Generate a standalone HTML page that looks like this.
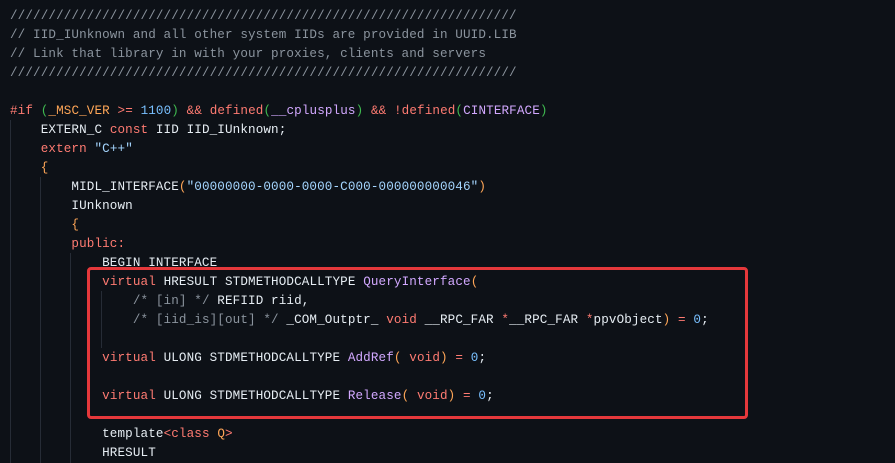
<!DOCTYPE html><html><head><style>
body{margin:0;width:895px;height:463px;background:#0d1117;overflow:hidden;position:relative}
pre{position:absolute;left:10px;top:7px;margin:0;font-family:"Liberation Mono",monospace;font-size:12.6px;line-height:19px;color:#e6edf3;letter-spacing:0.12px}
.c{color:#8b949e}.k{color:#ff7b72}.n{color:#79c0ff}.s{color:#a5d6ff}.g{color:#3fb950}.o{color:#ffa657}.p{color:#d2a8ff}
.gd{position:absolute;width:1px;background:#262c36}
.box{position:absolute;left:87px;top:267px;width:655px;height:146px;border:3px solid #e5383b;border-radius:4px}
</style></head><body>
<div class="gd" style="left:10px;top:120px;height:343px"></div>
<div class="gd" style="left:40px;top:177px;height:286px"></div>
<div class="gd" style="left:70px;top:253px;height:210px"></div>
<div class="gd" style="left:101px;top:291px;height:57px"></div>
<pre><span class="c">//////////////////////////////////////////////////////////////////
// IID_IUnknown and all other system IIDs are provided in UUID.LIB
// Link that library in with your proxies, clients and servers
//////////////////////////////////////////////////////////////////</span>

<span class="k">#if</span> <span class="g">(</span><span class="o">_MSC_VER</span> <span class="k">&gt;=</span> <span class="n">1100</span><span class="g">)</span> <span class="k">&amp;&amp; defined</span><span class="g">(</span><span class="p">__cplusplus</span><span class="g">)</span> <span class="k">&amp;&amp; !defined</span><span class="g">(</span><span class="p">CINTERFACE</span><span class="g">)</span>
    EXTERN_C <span class="k">const</span> IID IID_IUnknown;
    <span class="k">extern</span> <span class="s">"C++"</span>
    <span class="o">{</span>
        MIDL_INTERFACE<span class="o">(</span><span class="s">"00000000-0000-0000-C000-000000000046"</span><span class="o">)</span>
        IUnknown
        <span class="o">{</span>
        <span class="k">public:</span>
            BEGIN_INTERFACE
            <span class="k">virtual</span> HRESULT STDMETHODCALLTYPE <span class="p">QueryInterface</span><span class="o">(</span>
                <span class="c">/* [in] */</span> REFIID riid,
                <span class="c">/* [iid_is][out] */</span> _COM_Outptr_ <span class="k">void</span> __RPC_FAR <span class="k">*</span>__RPC_FAR <span class="k">*</span>ppvObject<span class="o">)</span> <span class="k">=</span> <span class="n">0</span>;

            <span class="k">virtual</span> ULONG STDMETHODCALLTYPE <span class="p">AddRef</span><span class="o">(</span> <span class="k">void</span><span class="o">)</span> <span class="k">=</span> <span class="n">0</span>;

            <span class="k">virtual</span> ULONG STDMETHODCALLTYPE <span class="p">Release</span><span class="o">(</span> <span class="k">void</span><span class="o">)</span> <span class="k">=</span> <span class="n">0</span>;

            template<span class="k">&lt;class</span> <span class="o">Q</span><span class="k">&gt;</span>
            HRESULT</pre>
<div class="box"></div>
</body></html>
